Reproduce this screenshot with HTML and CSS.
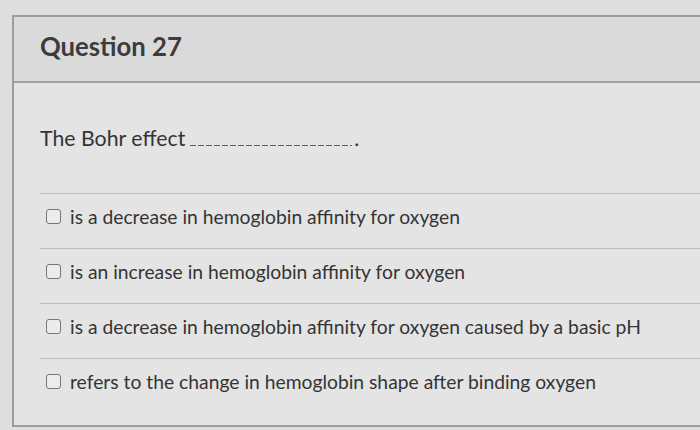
FILE: index.html
```html
<!DOCTYPE html>
<html lang="en">
<head>
<meta charset="utf-8">
<title>Question 27</title>
<link rel="stylesheet" href="styles.css">
</head>
<body>
<div class="card">
  <div class="card-header">
    <h2 class="title">Question 27</h2>
  </div>
  <div class="card-body">
    <p class="prompt">The Bohr effect <span class="blank"></span>.</p>
    <ul class="options">
      <li class="option"><span class="box"></span><span class="label">is a decrease in hemoglobin affinity for oxygen</span></li>
      <li class="option"><span class="box"></span><span class="label">is an increase in hemoglobin affinity for oxygen</span></li>
      <li class="option"><span class="box"></span><span class="label">is a decrease in hemoglobin affinity for oxygen caused by a basic pH</span></li>
      <li class="option"><span class="box"></span><span class="label">refers to the change in hemoglobin shape after binding oxygen</span></li>
    </ul>
  </div>
</div>
</body>
</html>
```

FILE: styles.css
```css
html, body {
  margin: 0;
  padding: 0;
  background: #dedede;
  height: 100%;
  overflow: hidden;
}
body {
  padding: 15px 0 0 12px;
  font-family: Lato, "Open Sans", sans-serif;
  color: #343436;
}
.card {
  width: 720px;
  height: 412px;
  border: 2px solid #9c9c9c;
  border-right: none;
  background: #e4e4e4;
  box-sizing: border-box;
}
.card-header {
  height: 66px;
  background: #dadada;
  border-bottom: 2px solid #a2a2a2;
  box-sizing: border-box;
  padding: 14px 0 0 26px;
}
.title {
  margin: 0;
  font-size: 25.7px;
  font-weight: 700;
  line-height: 30px;
  color: #3c3c3f;
}
.card-body {
  padding: 42px 0 0 26px;
}
.prompt {
  margin: 0;
  font-size: 21.3px;
  line-height: 26px;
  display: flex;
  align-items: flex-end;
}
.blank {
  display: inline-block;
  width: 162px;
  height: 4px;
  margin: 0 2px 5px 5px;
  background: repeating-linear-gradient(90deg, #5e5e5e 0 6px, transparent 6px 8px);
  background-size: 100% 1.5px;
  background-repeat: no-repeat;
  background-position: bottom;
}
.options {
  list-style: none;
  margin: 42px 0 0 0;
  padding: 0;
}
.option {
  height: 55px;
  border-top: 1.5px solid #bdbdbd;
  display: flex;
  align-items: center;
  padding-left: 6px;
  padding-bottom: 10px;
  box-sizing: border-box;
  font-size: 19.3px;
}
.box {
  width: 13px;
  height: 13px;
  border: 1.5px solid #767678;
  border-radius: 3px;
  background: #ececec;
  margin-right: 9px;
  flex: none;
}
.label {
  white-space: nowrap;
}
```
